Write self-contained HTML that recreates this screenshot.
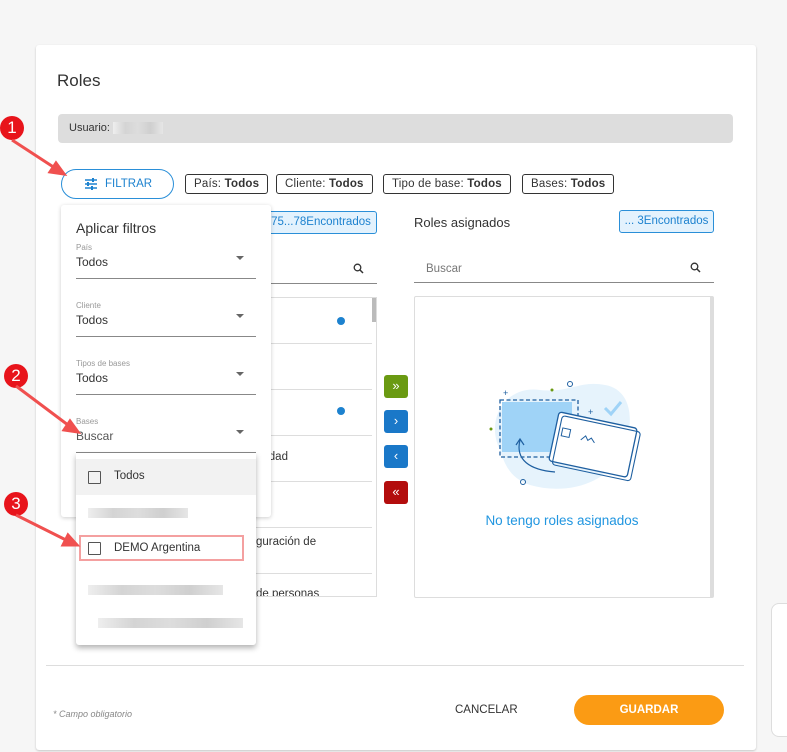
<!DOCTYPE html>
<html><head><meta charset="utf-8"><style>
*{box-sizing:border-box;margin:0;padding:0}
body{width:787px;height:752px;background:#f6f6f6;font-family:"Liberation Sans",sans-serif;position:relative;overflow:hidden;color:#333}
.abs{position:absolute}
.card{left:36px;top:45px;width:720px;height:705px;background:#fff;border-radius:3px;box-shadow:0 1px 2px rgba(0,0,0,.2)}
.chip{top:174px;height:20px;border:1px solid #333;border-radius:3px;font-size:11.5px;line-height:18px;padding:0 8px;color:#333;letter-spacing:.2px}
.badge{height:23px;border:1px solid #2a8fd8;border-radius:3px;background:#e3f2fd;color:#1d82cf;font-size:11.5px;line-height:21px;text-align:center}
.num{width:24px;height:24px;border-radius:50%;background:#e8141b;color:#fff;font-size:17px;line-height:24px;text-align:center}
.sel{left:76px;width:180px;border-bottom:1px solid #888}
.sel .l{font-size:8px;color:#999}
.sel .v{font-size:12px;color:#333;margin-top:3px}
.caret{position:absolute;right:12px;width:0;height:0;border-left:4px solid transparent;border-right:4px solid transparent;border-top:4px solid #666}
.blur{background:linear-gradient(90deg,#eee,#d4d4d4,#ddd,#cfcfcf,#e6e6e6);height:10px}
.cb{width:13px;height:13px;border:1px solid #555;border-radius:1px}
.ab{left:384px;width:24px;height:23px;border-radius:3px;color:#fff;font-size:13px;line-height:22px;text-align:center}
</style></head><body>
<div class="abs card"></div>
<div class="abs" style="left:57px;top:71px;font-size:17px;color:#333">Roles</div>
<div class="abs" style="left:58px;top:114px;width:675px;height:29px;background:#ddd;border-radius:4px"></div>
<div class="abs" style="left:69px;top:122px;font-size:11px;color:#333">Usuario:</div>
<div class="abs blur" style="left:113px;top:122px;width:50px;height:12px"></div>

<div class="abs" style="left:61px;top:169px;width:113px;height:30px;border:1px solid #2a8fd8;border-radius:15px"></div>
<svg class="abs" style="left:84px;top:177px" width="14" height="14" viewBox="0 0 14 14"><g stroke="#1d82cf" stroke-width="1.5"><path d="M1 3h12M1 7h12M1 11h12"/></g><g fill="#1d82cf"><rect x="8" y="1" width="2" height="4"/><rect x="3" y="5" width="2" height="4"/><rect x="7" y="9" width="2" height="4"/></g></svg>
<div class="abs" style="left:105px;top:178px;font-size:11.5px;color:#1d82cf">FILTRAR</div>
<div class="abs chip" style="left:185px">País: <b>Todos</b></div>
<div class="abs chip" style="left:276px">Cliente: <b>Todos</b></div>
<div class="abs chip" style="left:383px">Tipo de base: <b>Todos</b></div>
<div class="abs chip" style="left:522px">Bases: <b>Todos</b></div>

<!-- left list -->
<div class="abs badge" style="left:265px;top:211px;width:112px">75...78Encontrados</div>
<div class="abs" style="left:270px;top:283px;width:107px;border-bottom:1px solid #888"></div>
<svg class="abs" style="left:353px;top:263px" width="11" height="11" viewBox="0 0 11 11"><circle cx="4.5" cy="4.5" r="3.3" fill="none" stroke="#333" stroke-width="1.3"/><path d="M7 7l3 3" stroke="#333" stroke-width="1.5"/></svg>
<div class="abs" style="left:250px;top:297px;width:127px;height:300px;border:1px solid #ddd;border-left:none;background:#fff;overflow:hidden">
 <div style="position:absolute;right:0;top:0;width:4px;height:24px;background:#bbb"></div>
 <div style="position:absolute;right:0;top:0;width:4px;height:300px;background:#eee;z-index:-1"></div>
 <div style="position:absolute;left:0;top:45px;width:122px;border-top:1px solid #ddd"></div>
 <div style="position:absolute;left:0;top:91px;width:122px;border-top:1px solid #ddd"></div>
 <div style="position:absolute;left:0;top:137px;width:122px;border-top:1px solid #ddd"></div>
 <div style="position:absolute;left:0;top:183px;width:122px;border-top:1px solid #ddd"></div>
 <div style="position:absolute;left:0;top:229px;width:122px;border-top:1px solid #ddd"></div>
 <div style="position:absolute;left:0;top:275px;width:122px;border-top:1px solid #ddd"></div>
 <div style="position:absolute;left:87px;top:19px;width:8px;height:8px;border-radius:50%;background:#1d82cf"></div>
 <div style="position:absolute;left:87px;top:109px;width:8px;height:8px;border-radius:50%;background:#1d82cf"></div>
 <div style="position:absolute;left:6px;top:153px;font-size:11.5px">uridad</div>
 <div style="position:absolute;left:6px;top:238px;font-size:11.5px">guración de</div>
 <div style="position:absolute;left:6px;top:290px;font-size:11.5px">de personas</div>
</div>

<!-- arrows -->
<div class="abs ab" style="top:375px;background:#6a9a12">»</div>
<div class="abs ab" style="top:410px;background:#1a78c8">›</div>
<div class="abs ab" style="top:445px;background:#1a78c8">‹</div>
<div class="abs ab" style="top:481px;background:#b30d0d">«</div>

<!-- right -->
<div class="abs" style="left:414px;top:215px;font-size:13px;color:#333">Roles asignados</div>
<div class="abs badge" style="left:619px;top:210px;width:95px">... 3Encontrados</div>
<div class="abs" style="left:426px;top:263px;font-size:11.5px;color:#777">Buscar</div>
<svg class="abs" style="left:690px;top:262px" width="11" height="11" viewBox="0 0 11 11"><circle cx="4.5" cy="4.5" r="3.3" fill="none" stroke="#333" stroke-width="1.3"/><path d="M7 7l3 3" stroke="#333" stroke-width="1.5"/></svg>
<div class="abs" style="left:414px;top:282px;width:300px;border-bottom:1px solid #888"></div>
<div class="abs" style="left:414px;top:296px;width:300px;height:302px;border:1px solid #ddd;border-right:4px solid #ddd;border-radius:2px;background:#fff"></div>
<svg class="abs" style="left:485px;top:380px" width="160" height="115" viewBox="0 0 160 115">
<path d="M15 70C0 40 20 5 55 10C85 13 95 0 120 5C150 10 150 50 135 75C120 105 80 115 45 105C25 98 20 85 15 70Z" fill="#e6f3fc"/>
<rect x="17" y="22" width="70" height="50" fill="#9fd3f7"/>
<rect x="15" y="20" width="78" height="57" fill="none" stroke="#1e5fa0" stroke-width="1.3" stroke-dasharray="4 2.5"/>
<path d="M35 60C30 80 45 90 70 92" fill="none" stroke="#1e5fa0" stroke-width="1.2"/>
<path d="M31 65l4-6 4 6" fill="none" stroke="#1e5fa0" stroke-width="1.2"/>
<g transform="rotate(12 110 65)"><rect x="68" y="40" width="80" height="50" rx="3" fill="#fff" stroke="#1e5fa0" stroke-width="1.3"/><rect x="72" y="43" width="80" height="50" rx="3" fill="none" stroke="#1e5fa0" stroke-width="1.1"/>
<rect x="75" y="55" width="8" height="8" fill="none" stroke="#1e5fa0"/><path d="M95 63l4-5 3 4 3-3 4 4" fill="none" stroke="#1e5fa0"/></g>
<path d="M120 28l6 6 10-12" fill="none" stroke="#9fd3f7" stroke-width="3"/>
<circle cx="67" cy="10" r="1.5" fill="#6a9a12"/><circle cx="6" cy="49" r="1.5" fill="#6a9a12"/>
<circle cx="38" cy="102" r="2.5" fill="none" stroke="#1e5fa0"/><circle cx="85" cy="4" r="2.5" fill="none" stroke="#1e5fa0"/>
<text x="18" y="16" font-size="9" fill="#1e5fa0">+</text><text x="103" y="35" font-size="9" fill="#1e5fa0">+</text>
</svg>
<div class="abs" style="left:414px;top:513px;width:296px;text-align:center;font-size:13.5px;color:#2196e0">No tengo roles asignados</div>

<!-- filter panel -->
<div class="abs" style="left:61px;top:205px;width:210px;height:312px;background:#fff;border-radius:3px;box-shadow:0 1px 4px rgba(0,0,0,.2)"></div>
<div class="abs" style="left:76px;top:220px;font-size:14px;color:#333">Aplicar filtros</div>
<div class="abs sel" style="top:243px;height:36px"><div class="l">País</div><div class="v">Todos</div><div class="caret" style="top:13px"></div></div>
<div class="abs sel" style="top:301px;height:36px"><div class="l">Cliente</div><div class="v">Todos</div><div class="caret" style="top:13px"></div></div>
<div class="abs sel" style="top:359px;height:36px"><div class="l">Tipos de bases</div><div class="v">Todos</div><div class="caret" style="top:13px"></div></div>
<div class="abs sel" style="top:417px;height:36px"><div class="l">Bases</div><div class="v" style="color:#555">Buscar</div><div class="caret" style="top:13px"></div></div>

<!-- dropdown -->
<div class="abs" style="left:76px;top:453px;width:180px;height:192px;background:#fff;border-radius:0 0 3px 3px;box-shadow:0 3px 6px rgba(0,0,0,.3)">
 <div style="position:absolute;left:0;top:6px;width:180px;height:36px;background:#f2f2f2"></div>
 <div class="cb" style="position:absolute;left:12px;top:18px"></div>
 <div style="position:absolute;left:38px;top:17px;font-size:11.5px">Todos</div>
 <div class="blur" style="position:absolute;left:12px;top:55px;width:100px"></div>
 <div style="position:absolute;left:3px;top:82px;width:165px;height:26px;border:2px solid #f4a0a0"></div>
 <div class="cb" style="position:absolute;left:12px;top:89px"></div>
 <div style="position:absolute;left:38px;top:89px;font-size:11.5px">DEMO Argentina</div>
 <div class="blur" style="position:absolute;left:12px;top:132px;width:135px"></div>
 <div class="blur" style="position:absolute;left:22px;top:165px;width:145px"></div>
</div>

<!-- numbers & arrows -->
<div class="abs num" style="left:0;top:116px">1</div>
<div class="abs num" style="left:4px;top:364px">2</div>
<div class="abs num" style="left:4px;top:492px">3</div>
<svg class="abs" style="left:0;top:0" width="100" height="560"><g stroke="#f0504f" stroke-width="3" fill="#f0504f">
<path d="M12 140L58 170"/><path d="M64 174l-14-2 6-9z"/>
<path d="M16 386L72 428"/><path d="M78 432l-14-2 6-9z"/>
<path d="M16 515L70 542"/><path d="M77 545l-14 0 5-10z"/></g></svg>

<!-- footer -->
<div class="abs" style="left:46px;top:665px;width:698px;border-top:1px solid #ddd"></div>
<div class="abs" style="left:53px;top:709px;font-size:9px;font-style:italic;color:#888">* Campo obligatorio</div>
<div class="abs" style="left:455px;top:704px;font-size:11.5px;color:#333">CANCELAR</div>
<div class="abs" style="left:574px;top:695px;width:150px;height:30px;border-radius:15px;background:#fb9b14;color:#fff;font-size:11.5px;font-weight:bold;text-align:center;line-height:30px">GUARDAR</div>
<div class="abs" style="left:771px;top:603px;width:30px;height:134px;background:#fff;border-radius:8px;border:1px solid #ddd"></div>
</body></html>
